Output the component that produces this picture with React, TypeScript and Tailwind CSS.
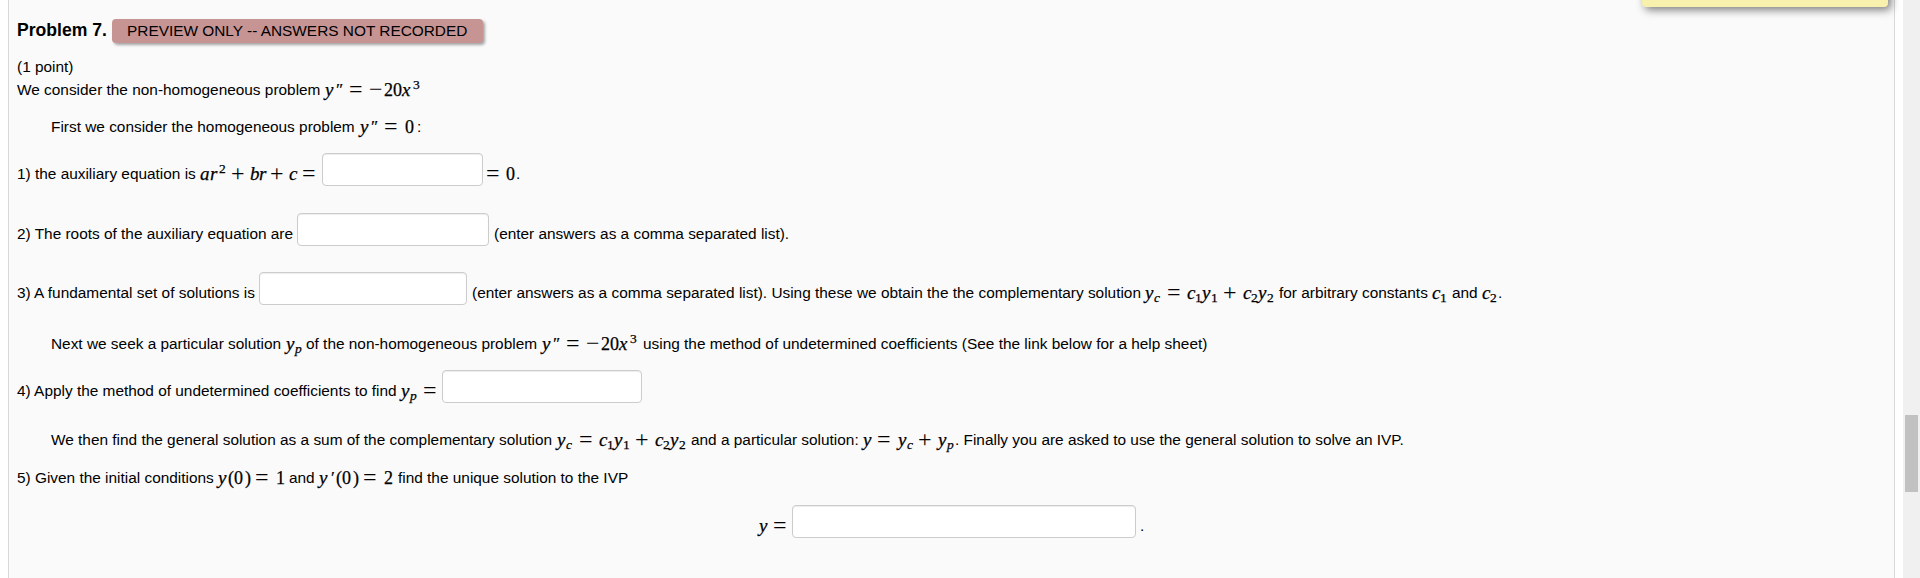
import type { ReactNode } from "react";
import { clsx } from "clsx";

type Props = { className?: string; children?: ReactNode };

// A line of prose; answer boxes hang 10px above it.
function Line({ className, children }: Props) {
  return (
    <div className={clsx("flex h-[22px] items-baseline", className)}>
      {children}
    </div>
  );
}

function AnswerLine({ className, children }: Props) {
  return (
    <div className={clsx("flex h-[33px] items-baseline pt-[10px]", className)}>
      {children}
    </div>
  );
}

function Text({ className, children }: Props) {
  return <span className={clsx("shrink-0", className)}>{children}</span>;
}

function Answer({ className, label }: { className: string; label: string }) {
  return (
    <input
      type="text"
      aria-label={label}
      className={clsx(
        "-mt-[10px] h-[33px] shrink-0 self-start rounded-[4px] border border-[#cccccc] bg-white px-1.5 shadow-[inset_0_1px_1px_rgba(0,0,0,0.075)]",
        className
      )}
    />
  );
}

// Inline formula, set one pixel below the prose
function Formula({ className, children }: Props) {
  return (
    <span
      className={clsx(
        "relative top-px flex shrink-0 items-baseline font-['Liberation_Serif',serif] leading-[0] [-webkit-text-stroke:0.25px_black]",
        className
      )}
    >
      {children}
    </span>
  );
}

// Math variable, number, operator, superscript, subscript and prime
function V({ className, children }: Props) {
  return <i className={clsx("shrink-0 text-[19px]", className)}>{children}</i>;
}

function N({ className, children }: Props) {
  return <span className={clsx("shrink-0 text-[18px]", className)}>{children}</span>;
}

function Op({ className, children }: Props) {
  return (
    <span
      className={clsx(
        "relative top-px -ml-px mr-px shrink-0 text-[24px] [-webkit-text-stroke:0px]",
        className
      )}
    >
      {children}
    </span>
  );
}

function Sup({ className, children }: Props) {
  return (
    <span className={clsx("relative -top-[7px] shrink-0 text-[13.5px]", className)}>
      {children}
    </span>
  );
}

function Sub({ className, children }: Props) {
  return (
    <span className={clsx("relative top-[3px] shrink-0 text-[13.5px]", className)}>
      {children}
    </span>
  );
}

function Prime({ className, children }: Props) {
  return (
    <i className={clsx("relative -top-px shrink-0 text-[17px]", className)}>
      {children}
    </i>
  );
}

function SecondDerivative() {
  return (
    <>
      <V className="w-[10px]">y</V>
      <Prime className="w-[15px]">″</Prime>
      <Op className="w-[20px]">=</Op>
    </>
  );
}

function Forcing() {
  return (
    <Formula className="-mt-px">
      <SecondDerivative />
      <Op className="w-[14px]">−</Op>
      <N className="w-[18px]">20</N>
      <V className="w-[11px]">x</V>
      <Sup className="w-[13px]">3</Sup>
    </Formula>
  );
}

function Complementary() {
  return (
    <Formula>
      <V className="w-[9px]">y</V>
      <Sub className="w-[14px] italic">c</Sub>
      <Op className="w-[19px]">=</Op>
      <V className="w-[8px]">c</V>
      <Sub className="w-[7px]">1</Sub>
      <V className="w-[9px]">y</V>
      <Sub className="w-[13px]">1</Sub>
      <Op className="w-[19px]">+</Op>
      <V className="w-[8px]">c</V>
      <Sub className="w-[7px]">2</Sub>
      <V className="w-[9px]">y</V>
      <Sub className="w-[12px]">2</Sub>
    </Formula>
  );
}

export default function App() {
  return (
    <div className="flex h-[578px] overflow-hidden bg-white font-['Liberation_Sans',Arial,sans-serif] text-[15.4px] leading-[22px] whitespace-pre text-black">
      <main className="relative ml-2 h-full w-[1887px] border-x border-[#d9d9d9] bg-[#fafafa] pl-2">
        <div className="absolute -top-10 right-[6px] h-[47px] w-[246px] rounded-[4px] bg-[#f8f0ad] shadow-[3px_3px_8px_rgba(0,0,0,0.5)]" />

        <div className="flex pt-[19px]">
          <h3 className="w-[95px] text-[17.6px] leading-[23px] font-bold">Problem 7.</h3>
          <div className="h-6 w-[371px] rounded-[4px] bg-[#c69492] pl-[15px] leading-6 shadow-[2px_2px_3px_rgba(0,0,0,0.35)]">
            PREVIEW ONLY -- ANSWERS NOT RECORDED
          </div>
        </div>

        <Line className="mt-[13px]">(1 point)</Line>
        <Line className="mt-px">
          <Text className="w-[308px]">We consider the non-homogeneous problem</Text>
          <Forcing />
        </Line>
        <Line className="mt-[15px] pl-[34px]">
          <Text className="w-[309px]">First we consider the homogeneous problem</Text>
          <Formula>
            <SecondDerivative />
            <N className="w-[12px]">0</N>
          </Formula>
          <Text>:</Text>
        </Line>

        <AnswerLine className="mt-[15px]">
          <Text className="w-[183px]">1) the auxiliary equation is</Text>
          <Formula>
            <V className="w-[10px]">a</V>
            <V className="w-[9px]">r</V>
            <Sup className="w-[13px]">2</Sup>
            <Op className="w-[18px]">+</Op>
            <V className="w-[9px]">b</V>
            <V className="w-[12px]">r</V>
            <Op className="w-[18px]">+</Op>
            <V className="w-[14px]">c</V>
            <Op className="w-[19px]">=</Op>
          </Formula>
          <Answer className="w-[161px]" label="Auxiliary polynomial" />
          <Formula className="ml-[4px]">
            <Op className="w-[19px]">=</Op>
            <N className="w-[10px]">0</N>
          </Formula>
          <Text>.</Text>
        </AnswerLine>
        <AnswerLine className="mt-[27px]">
          <Text className="w-[280px]">2) The roots of the auxiliary equation are</Text>
          <Answer className="w-[192px]" label="Roots" />
          <Text className="ml-[5px]">(enter answers as a comma separated list).</Text>
        </AnswerLine>
        <AnswerLine className="mt-[26px]">
          <Text className="w-[242px]">3) A fundamental set of solutions is</Text>
          <Answer className="w-[208px]" label="Fundamental set" />
          <Text className="ml-[5px] w-[673px]">
            (enter answers as a comma separated list). Using these we obtain the the complementary solution
          </Text>
          <Complementary />
          <Text className="w-[153px]">for arbitrary constants</Text>
          <Formula>
            <V className="w-[8px]">c</V>
            <Sub className="w-[12px]">1</Sub>
          </Formula>
          <Text className="w-[30px]">and</Text>
          <Formula>
            <V className="w-[8px]">c</V>
            <Sub className="w-[8px]">2</Sub>
          </Formula>
          <Text>.</Text>
        </AnswerLine>

        <Line className="mt-[28px] pl-[34px]">
          <Text className="w-[235px]">Next we seek a particular solution</Text>
          <Formula>
            <V className="w-[9px]">y</V>
            <Sub className="w-[11px] italic">p</Sub>
          </Formula>
          <Text className="w-[236px]">of the non-homogeneous problem</Text>
          <Forcing />
          <Text>using the method of undetermined coefficients (See the link below for a help sheet)</Text>
        </Line>
        <AnswerLine className="mt-[15px]">
          <Text className="w-[384px]">4) Apply the method of undetermined coefficients to find</Text>
          <Formula>
            <V className="w-[9px]">y</V>
            <Sub className="w-[14px] italic">p</Sub>
            <Op className="w-[18px]">=</Op>
          </Formula>
          <Answer className="w-[200px]" label="Particular solution" />
        </AnswerLine>
        <Line className="mt-[26px] pl-[34px]">
          <Text className="w-[506px]">We then find the general solution as a sum of the complementary solution</Text>
          <Complementary />
          <Text className="w-[172px]">and a particular solution:</Text>
          <Formula>
            <V className="w-[15px]">y</V>
            <Op className="w-[20px]">=</Op>
            <V className="w-[9px]">y</V>
            <Sub className="w-[12px] italic">c</Sub>
            <Op className="w-[19px]">+</Op>
            <V className="w-[9px]">y</V>
            <Sub className="w-[8px] italic">p</Sub>
          </Formula>
          <Text>. Finally you are asked to use the general solution to solve an IVP.</Text>
        </Line>
        <Line className="mt-[16px]">
          <Text className="w-[201px]">5) Given the initial conditions</Text>
          <Formula className="-mt-px">
            <V className="w-[10px]">y</V>
            <N className="w-[6px]">(</N>
            <N className="w-[11px]">0</N>
            <N className="w-[11px]">)</N>
            <Op className="w-[20px]">=</Op>
            <N className="w-[13px]">1</N>
          </Formula>
          <Text className="w-[30px]">and</Text>
          <Formula className="-mt-px">
            <V className="w-[11px]">y</V>
            <Prime className="w-[6px]">′</Prime>
            <N className="w-[6px]">(</N>
            <N className="w-[11px]">0</N>
            <N className="w-[11px]">)</N>
            <Op className="w-[20px]">=</Op>
            <N className="w-[14px]">2</N>
          </Formula>
          <Text>find the unique solution to the IVP</Text>
        </Line>
        <AnswerLine className="mt-[16px] pl-[742px]">
          <Formula>
            <V className="w-[15px]">y</V>
            <Op className="w-[18px]">=</Op>
          </Formula>
          <Answer className="w-[344px]" label="Solution of the IVP" />
          <Text className="ml-[4px]">.</Text>
        </AnswerLine>
      </main>

      <div className="ml-2 h-full w-[17px] bg-[#f0f0f0] pt-[415px] pl-[2px]">
        <div className="h-[77px] w-[13px] bg-[#c1c1c1]" />
      </div>
    </div>
  );
}
